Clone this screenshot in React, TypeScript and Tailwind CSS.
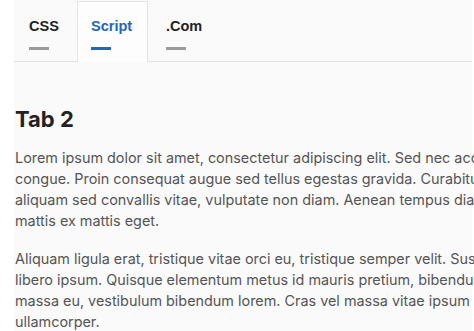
const tabs = [
  { label: "CSS", active: false, box: "w-[63px] pl-[14px]" },
  { label: "Script", active: true, box: "w-[71px] pl-[13px]" },
  { label: ".Com", active: false, box: "w-[72px] pl-[17px]" },
]

const para1 = [
  "Lorem ipsum dolor sit amet, consectetur adipiscing elit. Sed nec accumsan tortor, vel",
  "congue. Proin consequat augue sed tellus egestas gravida. Curabitur lorem sem,",
  "aliquam sed convallis vitae, vulputate non diam. Aenean tempus diam ut sapien",
  "mattis ex mattis eget.",
]

const para2 = [
  "Aliquam ligula erat, tristique vitae orci eu, tristique semper velit. Suspendisse",
  "libero ipsum. Quisque elementum metus id mauris pretium, bibendum dapibus",
  "massa eu, vestibulum bibendum lorem. Cras vel massa vitae ipsum dignissim",
  "ullamcorper.",
]

export default function App() {
  return (
    <div className="h-[331px] w-[474px] overflow-hidden bg-white">
      <div className="ml-[14px] h-full w-[458px] bg-[#fafafa] pt-[1px]">
        {/* Tab list */}
        <div className="flex border-b border-[#e2e2e2] font-['Liberation_Sans',Arial,sans-serif]">
          {tabs.map((t) => (
            <div
              key={t.label}
              className={
                t.active
                  ? `-mb-px flex flex-col border border-b-0 border-[#e4e4e4] bg-[#fdfdfd] pt-[14px] pb-[11px] ${t.box}`
                  : `flex flex-col border border-transparent pt-[14px] pb-[10px] ${t.box}`
              }
            >
              <span
                className={
                  t.active
                    ? "text-[14.5px] font-bold leading-5 text-[#1f66bf]"
                    : "text-[14.5px] font-bold leading-5 text-[#222]"
                }
              >
                {t.label}
              </span>
              <span
                className={
                  t.active
                    ? "mt-[11px] block h-[3px] w-[20px] bg-[#1e66c3]"
                    : "mt-[11px] block h-[3px] w-[20px] bg-[#9b9b9b]"
                }
              />
            </div>
          ))}
        </div>

        {/* Tab panel */}
        <div className="pl-[1px] pt-[43px] font-['Inter',sans-serif]">
          <h2 className="text-[22px] font-bold leading-7 text-[#222]">Tab 2</h2>
          <p className="mt-[14px] whitespace-nowrap text-[14.4px] leading-[21px] text-[#555]">
            {para1.map((l, i) => (
              <span key={i} className="block">
                {l}
              </span>
            ))}
          </p>
          <p className="mt-[17px] whitespace-nowrap text-[14.4px] leading-[21px] text-[#555]">
            {para2.map((l, i) => (
              <span key={i} className="block">
                {l}
              </span>
            ))}
          </p>
        </div>
      </div>
    </div>
  )
}
